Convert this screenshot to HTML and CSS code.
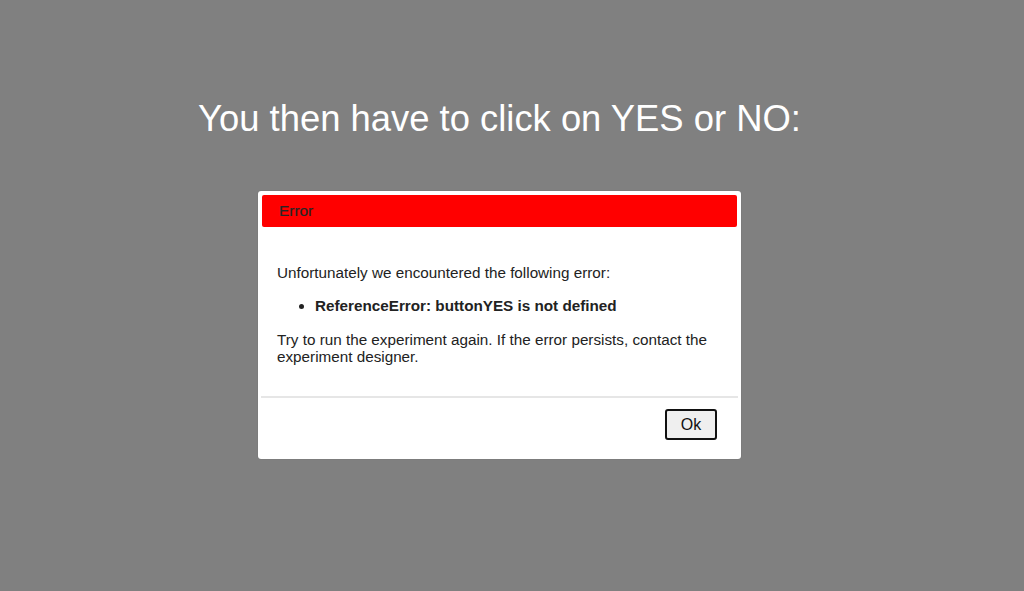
FILE: index.html
```html
<!DOCTYPE html>
<html>
<head>
<meta charset="utf-8">
<link rel="stylesheet" href="styles.css">
</head>
<body>
<div class="page">
  <h1 class="title">You then have to click on YES or NO:</h1>
  <div class="modal">
    <div class="modal-header">Error</div>
    <div class="modal-body">
      <p>Unfortunately we encountered the following error:</p>
      <ul>
        <li><b>ReferenceError: buttonYES is not defined</b></li>
      </ul>
      <p>Try to run the experiment again. If the error persists, contact the experiment designer.</p>
    </div>
    <div class="modal-footer">
      <button class="ok">Ok</button>
    </div>
  </div>
</div>
</body>
</html>
```
FILE: styles.css
```css
html, body {
  margin: 0;
  padding: 0;
  background: #808080;
  height: 100%;
  overflow: hidden;
}
body {
  font-family: "Liberation Sans", Arial, sans-serif;
}
.page {
  width: 999px;
  display: flex;
  flex-direction: column;
  align-items: center;
}
.title {
  margin: 98px 0 0 0;
  color: #ffffff;
  font-weight: normal;
  font-size: 36.4px;
  line-height: 42px;
  height: 42px;
}
.modal {
  margin-top: 51px;
  width: 475px;
  background: #ffffff;
  border-radius: 3px;
  padding: 4px 4px 0 4px;
  box-shadow: 0 0 1px rgba(0,0,0,0.3);
  color: #222222;
}
.modal-header {
  background: #ff0000;
  height: 32px;
  line-height: 32px;
  border-radius: 2px;
  padding-left: 17px;
  font-size: 15.4px;
  color: #262626;
  -webkit-text-stroke: 0.2px #262626;
}
.modal-body {
  padding: 22px 15px 16px 15px;
  font-size: 15.25px;
  line-height: 17px;
}
.modal-body p {
  margin: 15px 0;
}
.modal-body ul {
  margin: 15px 0;
  padding-left: 38px;
  font-size: 15.25px;
  line-height: 20px;
}
.modal-footer {
  margin: 0 -1px;
  border-top: 2px solid #e6e6e6;
  display: flex;
  justify-content: flex-end;
  padding: 11px 21px 19px 0;
}
.ok {
  width: 52px;
  height: 31px;
  border: 2px solid #111111;
  border-radius: 3px;
  background: #efefef;
  font-family: "Liberation Sans", Arial, sans-serif;
  font-size: 16px;
  color: #111111;
  padding: 0;
}
```
